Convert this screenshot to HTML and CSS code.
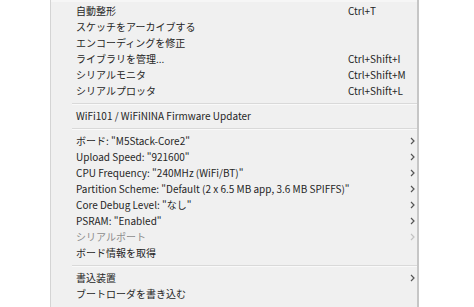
FILE: index.html
```html
<!DOCTYPE html>
<html lang="ja">
<head>
    <meta charset="UTF-8">
    <title>ツール</title>
    <link rel="stylesheet" href="styles.css">
</head>
<body>
    <div class="screen">
        <div class="gutter"></div>
        <div class="menu">
            <div class="item"><span class="label">自動整形</span><span class="key">Ctrl+T</span><span></span></div>
            <div class="item"><span class="label">スケッチをアーカイブする</span><span class="key"></span><span></span></div>
            <div class="item"><span class="label">エンコーディングを修正</span><span class="key"></span><span></span></div>
            <div class="item"><span class="label">ライブラリを管理...</span><span class="key">Ctrl+Shift+I</span><span></span></div>
            <div class="item"><span class="label">シリアルモニタ</span><span class="key">Ctrl+Shift+M</span><span></span></div>
            <div class="item"><span class="label">シリアルプロッタ</span><span class="key">Ctrl+Shift+L</span><span></span></div>

            <div class="sep"></div>

            <div class="item"><span class="label">WiFi101 / WiFiNINA Firmware Updater</span><span class="key"></span><span></span></div>

            <div class="sep"></div>

            <div class="item"><span class="label">ボード: "M5Stack-Core2"</span><span class="key"></span>
                <svg class="arrow" width="5" height="8" viewBox="0 0 5 8"><path d="M1 1 L4 4 L1 7" /></svg></div>
            <div class="item"><span class="label">Upload Speed: "921600"</span><span class="key"></span>
                <svg class="arrow" width="5" height="8" viewBox="0 0 5 8"><path d="M1 1 L4 4 L1 7" /></svg></div>
            <div class="item"><span class="label">CPU Frequency: "240MHz (WiFi/BT)"</span><span class="key"></span>
                <svg class="arrow" width="5" height="8" viewBox="0 0 5 8"><path d="M1 1 L4 4 L1 7" /></svg></div>
            <div class="item"><span class="label">Partition Scheme: "Default (2 x 6.5 MB app, 3.6 MB SPIFFS)"</span><span class="key"></span>
                <svg class="arrow" width="5" height="8" viewBox="0 0 5 8"><path d="M1 1 L4 4 L1 7" /></svg></div>
            <div class="item"><span class="label">Core Debug Level: "なし"</span><span class="key"></span>
                <svg class="arrow" width="5" height="8" viewBox="0 0 5 8"><path d="M1 1 L4 4 L1 7" /></svg></div>
            <div class="item"><span class="label">PSRAM: "Enabled"</span><span class="key"></span>
                <svg class="arrow" width="5" height="8" viewBox="0 0 5 8"><path d="M1 1 L4 4 L1 7" /></svg></div>
            <div class="item disabled"><span class="label">シリアルポート</span><span class="key"></span>
                <svg class="arrow" width="5" height="8" viewBox="0 0 5 8"><path d="M1 1 L4 4 L1 7" /></svg></div>
            <div class="item"><span class="label">ボード情報を取得</span><span class="key"></span><span></span></div>

            <div class="sep"></div>

            <div class="item"><span class="label">書込装置</span><span class="key"></span>
                <svg class="arrow" width="5" height="8" viewBox="0 0 5 8"><path d="M1 1 L4 4 L1 7" /></svg></div>
            <div class="item"><span class="label">ブートローダを書き込む</span><span class="key"></span><span></span></div>
        </div>
    </div>
</body>
</html>
```

FILE: styles.css
```css
* {
    margin: 0;
    padding: 0;
    box-sizing: border-box;
}

body {
    background: #ffffff;
    font-family: "Noto Sans CJK JP", "Noto Sans", sans-serif;
    font-size: 10px;
    color: #262626;
}

.screen {
    display: flex;
    height: 307px;
    overflow: hidden;
}

.gutter {
    width: 50px;
    flex-shrink: 0;
}

.menu {
    width: 369px;
    flex-shrink: 0;
    background: #f0f0f0;
    border-left: 1px solid #d4d4d4;
    border-right: 2px solid #c6c6c6;
    padding-top: 3px;
    box-shadow: inset 0 2px 0 #f6f6f6;
}

.item {
    display: grid;
    grid-template-columns: minmax(0, 1fr) 59px 10px;
    align-items: center;
    height: 16px;
    line-height: 16px;
    padding-left: 25px;
    white-space: nowrap;
}

.label {
    overflow: visible;
}

.arrow {
    fill: none;
    stroke: #555555;
    stroke-width: 1.2;
    margin-left: 3px;
}

.disabled {
    color: #8d8d8d;
}

.disabled .arrow {
    stroke: #c2c2c2;
}

.sep {
    height: 1px;
    background: #d9d9d9;
    margin: 4px 0 4px 21px;
    box-shadow: 0 1px 0 #f9f9f9;
}
```
